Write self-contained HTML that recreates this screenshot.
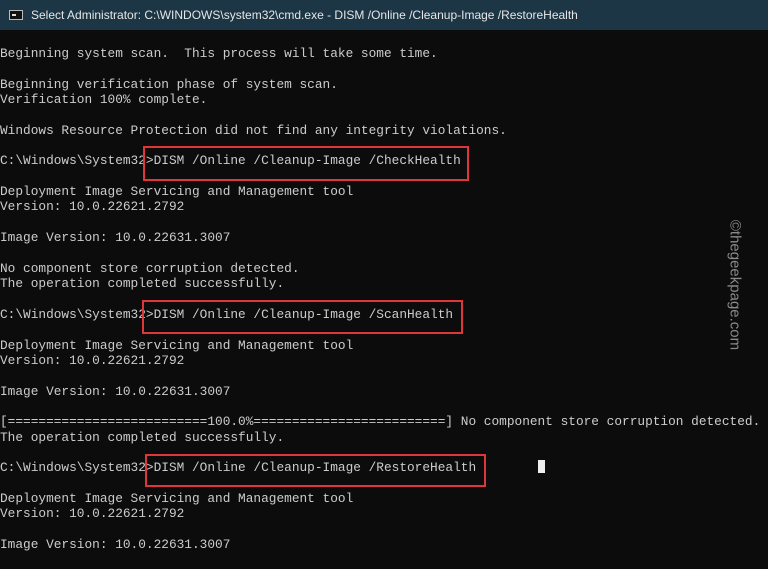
<!DOCTYPE html>
<html><head><meta charset="utf-8"><style>
html,body{margin:0;padding:0;width:768px;height:569px;overflow:hidden;background:#0c0c0c}
.title{position:absolute;left:0;top:0;width:768px;height:30px;background:#1c3645;color:#e6e6e6;font:12px "Liberation Sans",sans-serif;line-height:30px}
.title span{position:absolute;left:31px;top:0}
.icon{position:absolute;left:9px;top:10px;width:14px;height:10px;background:#111;border:1px solid #bbb;box-sizing:border-box}
.icon:after{content:"";position:absolute;left:2px;top:3px;width:4px;height:2px;background:#ddd}
pre{position:absolute;left:0;top:46px;margin:0;font:12.8px/15.35px "Liberation Mono",monospace;color:#cccccc;white-space:pre}
.box{position:absolute;border:2px solid #e0353a;box-sizing:border-box}
.cur{position:absolute;left:538px;top:460px;width:7px;height:13px;background:#eee}
.wm{position:absolute;left:735px;top:285px;transform:translate(-50%,-50%) rotate(90deg);font:15px "Liberation Sans",sans-serif;color:#8a8a8a;white-space:nowrap}
</style></head><body>
<div class="title"><div class="icon"></div><span>Select Administrator: C:\WINDOWS\system32\cmd.exe - DISM  /Online /Cleanup-Image /RestoreHealth</span></div>
<pre>Beginning system scan.  This process will take some time.

Beginning verification phase of system scan.
Verification 100% complete.

Windows Resource Protection did not find any integrity violations.

C:\Windows\System32&gt;DISM /Online /Cleanup-Image /CheckHealth

Deployment Image Servicing and Management tool
Version: 10.0.22621.2792

Image Version: 10.0.22631.3007

No component store corruption detected.
The operation completed successfully.

C:\Windows\System32&gt;DISM /Online /Cleanup-Image /ScanHealth

Deployment Image Servicing and Management tool
Version: 10.0.22621.2792

Image Version: 10.0.22631.3007

[==========================100.0%=========================] No component store corruption detected.
The operation completed successfully.

C:\Windows\System32&gt;DISM /Online /Cleanup-Image /RestoreHealth

Deployment Image Servicing and Management tool
Version: 10.0.22621.2792

Image Version: 10.0.22631.3007</pre>
<div class="box" style="left:143px;top:146px;width:326px;height:35px"></div>
<div class="box" style="left:142px;top:300px;width:321px;height:34px"></div>
<div class="box" style="left:145px;top:454px;width:341px;height:33px"></div>
<div class="cur"></div>
<div class="wm">©thegeekpage.com</div>
</body></html>
